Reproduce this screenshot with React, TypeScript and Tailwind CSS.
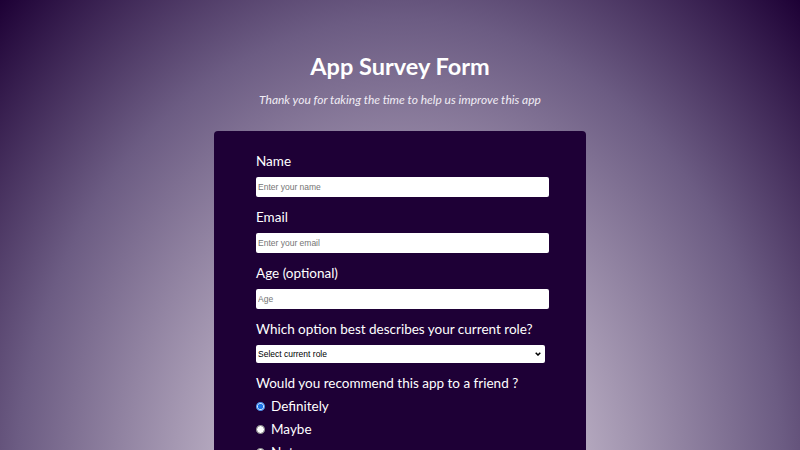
import { useState } from 'react';

const roles = ['Student', 'Full Time Job', 'Full Time Learner', 'Prefer not to say', 'Other'];
const recommend = ['Definitely', 'Maybe', 'Not sure'];

export default function App() {
  const [choice, setChoice] = useState('Definitely');

  return (
    <div
      className="min-h-screen w-full flex flex-col items-center text-white overflow-hidden bg-[radial-gradient(ellipse_at_50%_100%,#d4ccd8_0%,#b6aac0_32%,#6c5c83_68%,#1d0035_100%)]"
      style={{ fontFamily: 'Lato, "Open Sans", sans-serif' }}
    >
      {/* Header */}
      <h1 className="mt-[48px] text-[23.5px] leading-[36px] font-bold">App Survey Form</h1>
      <p className="mt-[8px] text-[12px] leading-[16px] italic text-[#f0ecf4]">
        Thank you for taking the time to help us improve this app
      </p>

      {/* Form card */}
      <form className="mt-[23px] w-[372px] rounded-[4px] bg-[#1e0036] pl-[42px] pr-[37px] pt-[20px] pb-8">
        <label className="block text-[13.5px] leading-[20px] mb-[6px]">Name</label>
        <input
          type="text"
          placeholder="Enter your name"
          className="block w-full h-[20px] mb-[10px] rounded-[2px] bg-white px-[2px] text-[8.5px] text-black placeholder:text-[#757575] outline-none"
          style={{ fontFamily: '"Liberation Sans", Arial, sans-serif' }}
        />

        <label className="block text-[13.5px] leading-[20px] mb-[6px]">Email</label>
        <input
          type="email"
          placeholder="Enter your email"
          className="block w-full h-[20px] mb-[10px] rounded-[2px] bg-white px-[2px] text-[8.5px] text-black placeholder:text-[#757575] outline-none"
          style={{ fontFamily: '"Liberation Sans", Arial, sans-serif' }}
        />

        <label className="block text-[13.5px] leading-[20px] mb-[6px]">Age (optional)</label>
        <input
          type="number"
          placeholder="Age"
          className="block w-full h-[20px] mb-[10px] rounded-[2px] bg-white px-[2px] text-[8.5px] text-black placeholder:text-[#757575] outline-none"
          style={{ fontFamily: '"Liberation Sans", Arial, sans-serif' }}
        />

        <label className="block text-[13.5px] leading-[20px] mb-[6px]">
          Which option best describes your current role?
        </label>
        <div className="relative w-[289px] h-[18px] mb-[10px]">
          <select
            defaultValue=""
            className="block w-full h-full appearance-none rounded-[2px] bg-white pl-[2px] text-[8.5px] text-black outline-none"
            style={{ fontFamily: '"Liberation Sans", Arial, sans-serif' }}
          >
            <option value="" disabled>
              Select current role
            </option>
            {roles.map((r) => (
              <option key={r}>{r}</option>
            ))}
          </select>
          <svg
            className="pointer-events-none absolute right-[4px] top-[7px] w-[6px] h-[4px] text-black"
            viewBox="0 0 6 4"
            fill="none"
            stroke="currentColor"
            strokeWidth={1.5}
          >
            <path d="M0.7 0.7l2.3 2.3 2.3-2.3" />
          </svg>
        </div>

        <label className="block text-[13.5px] leading-[20px] mb-[2px]">
          Would you recommend this app to a friend ?
        </label>
        {recommend.map((r) => (
          <label key={r} className="flex items-center h-[23px] text-[13.5px] cursor-pointer">
            <input
              type="radio"
              name="recommend"
              checked={choice === r}
              onChange={() => setChoice(r)}
              className="m-0 w-[9px] h-[9px] accent-[#1a73e8]"
            />
            <span className="ml-[6px]">{r}</span>
          </label>
        ))}
      </form>
    </div>
  );
}
